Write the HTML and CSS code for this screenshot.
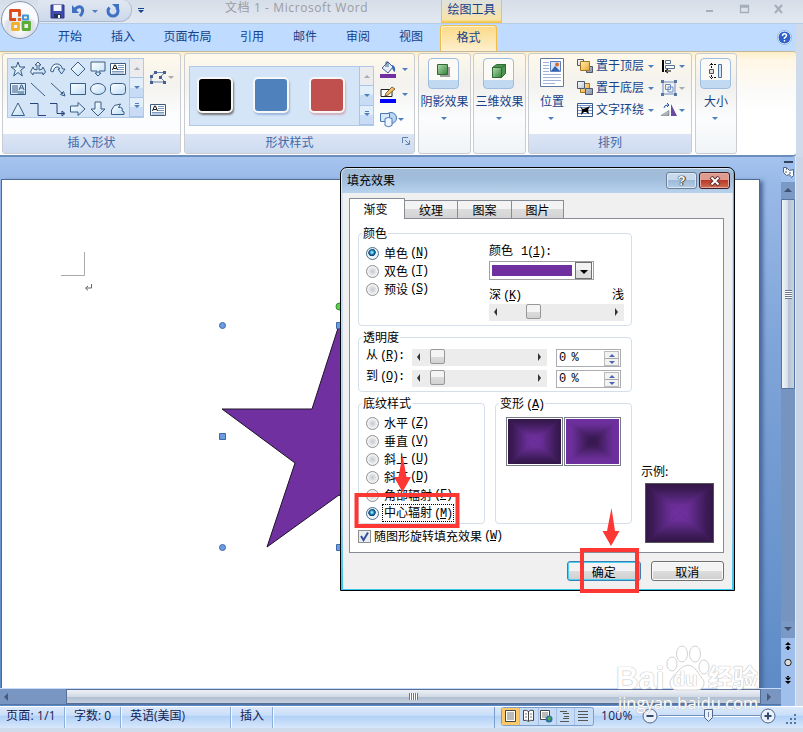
FILE: index.html
```html
<!DOCTYPE html>
<html lang="zh-CN">
<head>
  <meta charset="UTF-8">
  <title>文档 1 - Microsoft Word</title>
  <link rel="stylesheet" href="styles.css">
</head>
<body>
  <svg class="defs" width="0" height="0">
    <defs>
      <linearGradient id="shape" x1="0" y1="0" x2="1" y2="1"><stop offset="0" stop-color="#fff"/><stop offset="1" stop-color="#bcdcf5"/></linearGradient>
      <linearGradient id="green" x1="0" y1="0" x2="1" y2="1"><stop offset="0" stop-color="#b4dfb0"/><stop offset="1" stop-color="#34803b"/></linearGradient>
      <linearGradient id="gold" x1="0" y1="0" x2="1" y2="1"><stop offset="0" stop-color="#fff0b8"/><stop offset="1" stop-color="#eba529"/></linearGradient>
      <linearGradient id="grey" x1="0" y1="0" x2="1" y2="1"><stop offset="0" stop-color="#fafcff"/><stop offset="1" stop-color="#8794a8"/></linearGradient>
      <linearGradient id="right" x1="0" x2="1" y1="0" y2="0"><stop offset="0" stop-color="#7030a0"/><stop offset=".25" stop-color="#6a2e98"/><stop offset=".8" stop-color="#3c1b56"/><stop offset="1" stop-color="#331648"/></linearGradient>
      <linearGradient id="down" x1="0" x2="0" y1="0" y2="1"><stop offset="0" stop-color="#7030a0"/><stop offset=".25" stop-color="#6a2e98"/><stop offset=".8" stop-color="#3c1b56"/><stop offset="1" stop-color="#331648"/></linearGradient>
      <linearGradient id="right2" x1="0" x2="1" y1="0" y2="0"><stop offset="0" stop-color="#331648"/><stop offset=".2" stop-color="#3c1b56"/><stop offset=".75" stop-color="#6a2e98"/><stop offset="1" stop-color="#7030a0"/></linearGradient>
      <linearGradient id="down2" x1="0" x2="0" y1="0" y2="1"><stop offset="0" stop-color="#331648"/><stop offset=".2" stop-color="#3c1b56"/><stop offset=".75" stop-color="#6a2e98"/><stop offset="1" stop-color="#7030a0"/></linearGradient>
      <symbol id="center-out" viewBox="0 0 100 100" preserveAspectRatio="none">
        <rect width="100" height="100" fill="#4b2170"/>
        <path d="M50 50L100 0V100z" fill="url(#right)"/><path d="M50 50L100 0V100z" fill="url(#right)" transform="rotate(180 50 50)"/>
        <path d="M50 50L100 100H0z" fill="url(#down)"/><path d="M50 50L100 100H0z" fill="url(#down)" transform="rotate(180 50 50)"/>
      </symbol>
      <symbol id="center-in" viewBox="0 0 100 100" preserveAspectRatio="none">
        <rect width="100" height="100" fill="#5b2783"/>
        <path d="M50 50L100 0V100z" fill="url(#right2)"/><path d="M50 50L100 0V100z" fill="url(#right2)" transform="rotate(180 50 50)"/>
        <path d="M50 50L100 100H0z" fill="url(#down2)"/><path d="M50 50L100 100H0z" fill="url(#down2)" transform="rotate(180 50 50)"/>
      </symbol>
      <symbol id="textbox" viewBox="0 0 16 16"><path d="M.5 2.500h15v11H.5z" fill="#fff" stroke="#3c5a80"/><path d="M2 10.500h12M2 12h12M8 4.500h6M8 6.500h6M8 8.500h6" stroke="#7b98bd"/><path d="M2.500 9l2-5h1l2 5M3.500 7.500h3" stroke="#111" fill="none"/></symbol>
    </defs>
  </svg>

  <header class="titlebar">
    <div class="quick">
      <svg width="15" height="15" viewBox="0 0 15 15"><path d="M1 1h13v13H1z" fill="#3f4cae" stroke="#2c3488"/><path d="M3.500 1h8v6h-8z" fill="#f4f7ff"/><path d="M4 10h7v4H4z" fill="#26305c"/><path d="M8 11h2v3H8z" fill="#fff"/></svg>
      <svg width="14" height="14" viewBox="0 0 14 14"><path d="M3 5q5-4 7-1 2 4-2 8" fill="none" stroke="#3f70c4" stroke-width="3"/><path d="M0 1v8h7z" fill="#3f70c4"/></svg>
      <i class="arrow"></i>
      <svg width="14" height="14" viewBox="0 0 14 14"><path d="M3.500 3.500a5 5 0 1 0 7 0" fill="none" stroke="#3f70c4" stroke-width="3"/><path d="M6 0h7v7z" fill="#3f70c4"/></svg>
    </div>
    <div class="more"><b></b><i class="arrow"></i></div>
    <div class="doc-title">文档 1 - Microsoft Word</div>
    <div class="context-title">绘图工具</div>
    <svg class="caption" width="80" height="20" viewBox="0 0 80 20"><g fill="none" stroke="#a5adb8" stroke-width="2"><path d="M2 11h7"/><path d="M36.500 5.500h8v7h-8zM36 7h9" stroke-width="1.300"/><path d="M71 5l7 8M78 5l-7 8"/></g></svg>
  </header>
  <svg class="office" width="40" height="40" viewBox="0 0 40 40">
    <defs><radialGradient id="orb" cy=".75"><stop offset="0" stop-color="#fff"/><stop offset=".7" stop-color="#d9dee6"/><stop offset="1" stop-color="#f5f7fa"/></radialGradient></defs>
    <circle cx="20" cy="20" r="18.500" fill="url(#orb)" stroke="#8a97aa"/><path d="M3 21a17 17 0 0 1 34 0q-17-7-34 0z" fill="#fff" opacity=".55"/>
    <g fill="none" stroke-width="2.800" stroke-linejoin="round"><path d="M16 19.500h-5.500v-9h9v6" stroke="#dd4b18"/><path d="M23 15.500h5v4h-5z" stroke="#4196d6" stroke-width="2"/><path d="M12.500 23.500h6v6h-6z" stroke="#f2b02d"/><path d="M23 22.500h6.500v7H23z" stroke="#5bab35"/></g>
    <path d="M18 18h3v3h-3z" fill="#e6641e"/>
  </svg>

  <nav class="tabs">
    <a>开始</a><a>插入</a><a class="wide">页面布局</a><a>引用</a><a>邮件</a><a>审阅</a><a>视图</a><a class="active">格式</a>
    <svg class="help" width="15" height="15" viewBox="0 0 15 15"><circle cx="7.500" cy="7.500" r="6.500" fill="#2e62c9" stroke="#fff"/><circle cx="7.500" cy="7.500" r="7" fill="none" stroke="#7c9bd0" stroke-width=".7"/><path d="M5.500 6q0-2.200 2-2.200t2 1.800q0 1.200-2 2.200v1.200M7.500 10v1.600" stroke="#fff" stroke-width="1.500" fill="none"/></svg>
  </nav>

  <section class="ribbon">
    <div class="group insert">
      <div class="content">
        <div class="gallery">
          <div class="shapes">
            <svg viewBox="0 0 16 16"><path d="M8 1l1.800 5H15l-4.300 3.200L12.300 15 8 11.500 3.700 15l1.600-5.800L1 6h5.200z"/></svg>
            <svg viewBox="0 0 16 16"><path d="M8 1l3 3H9v5q4 0 4-3l2.500 5-2.500 3v-2H3v2L.5 11 3 6q0 3 4 3V4H5z"/></svg>
            <svg viewBox="0 0 16 16"><path d="M.5 10Q2 2 8 3q4 1 4.500 5H15l-3.500 5L8 8h2Q9 5 6 6q-2 1-3 5z"/></svg>
            <svg viewBox="0 0 16 16"><path d="M8 1l7 7-7 7-7-7z"/></svg>
            <svg viewBox="0 0 16 16"><path d="M1 1h14v9H9v2h2l-3 3-3-3h2v-2H1z"/></svg>
            <svg><use href="#textbox"/></svg>
            <svg viewBox="0 0 16 16"><path d="M.5 2.500h15v11H.5z"/><path d="M3 4v8M5 4v8M7 4v8M9 10v3M11 10v3M13 10v3M9 9l2-5h1l2 5M10 7h3"/></svg>
            <svg viewBox="0 0 16 16"><path d="M1 2l14 13"/></svg>
            <svg viewBox="0 0 16 16"><path d="M1 2l12 11M15 15l-1.500-4.500-3 3z"/></svg>
            <svg viewBox="0 0 16 16"><path d="M.5 2.500h15v11H.5z"/></svg>
            <svg viewBox="0 0 16 16"><ellipse cx="8" cy="8" rx="7.500" ry="5.500"/></svg>
            <svg viewBox="0 0 16 16"><rect x=".5" y="2.500" width="15" height="11" rx="3"/></svg>
            <svg viewBox="0 0 16 16"><path d="M8 2l6.500 12.500h-13z"/></svg>
            <svg viewBox="0 0 16 16"><path class="line" d="M0 2.500h8v12h8"/></svg>
            <svg viewBox="0 0 16 16"><path class="line" d="M0 2.500h7v10h7M12 10l3 2.500-3 2.500z"/></svg>
            <svg viewBox="0 0 16 16"><path d="M.5 5H8V1.500L15 8l-7 6.500V11H.5z"/></svg>
            <svg viewBox="0 0 16 16"><path d="M5 1h6v7h4l-7 7-7-7h4z"/></svg>
            <svg viewBox="0 0 16 16"><path d="M1.500 13.500V9l3-4.500 6-1.500-2 3.500q5-1 3.500 3.500 3 0 2 3.500z"/></svg>
          </div>
          <div class="scroll"><span><i class="arrow up"></i></span><span><i class="arrow"></i></span><span><i class="arrow bar"></i></span></div>
        </div>
        <div class="edit-tools">
          <div><svg width="17" height="14" viewBox="0 0 17 14"><path d="M5 2.500h10L10 7l5 5H1V7z" fill="none" stroke="#6583b5"/><path d="M4 1h3v3H4zM13 1h3v3h-3zM9 6h3v3H9zM13 11h3v3h-3zM0 11h3v3H0zM0 5h3v3H0z" fill="#45608f"/></svg><i class="arrow dim"></i></div>
          <svg width="16" height="16"><use href="#textbox"/></svg>
        </div>
      </div>
      <footer>插入形状</footer>
    </div>

    <div class="group styles">
      <div class="content">
        <div class="gallery">
          <div class="swatches"><b class="black"></b><b class="blue"></b><b class="red"></b></div>
          <div class="scroll"><span><i class="arrow up"></i></span><span><i class="arrow"></i></span><span><i class="arrow bar"></i></span></div>
        </div>
        <div class="fills">
          <div><svg width="17" height="17" viewBox="0 0 17 17"><path d="M8 1l5 5-5 6-6-5z" fill="#e5eefb" stroke="#45608f"/><path d="M6 6V1h2v5" fill="none" stroke="#45608f"/><path d="M12 4q4 1 3 7-2-1-3-4z" fill="#3867b5"/><path d="M0 13h16v4H0z" fill="#7030a0"/></svg><i class="arrow"></i></div>
          <div><svg width="17" height="17" viewBox="0 0 17 17"><path d="M1 3.500h11v7H1z" fill="#fff" stroke="#222"/><path d="M5 10l1-3 6-6 3 2-7 6z" fill="#f0c36a" stroke="#6b4a22" stroke-width=".8"/><path d="M0 13h16v4H0z" fill="#00f"/></svg><i class="arrow"></i></div>
          <div><svg width="17" height="17" viewBox="0 0 17 17"><circle cx="11" cy="7" r="5.500" fill="#b9d5f2" stroke="#4a79b5"/><path d="M.5 2.500h9v8h-9z" fill="#d8e9fa" stroke="#4a79b5"/><path d="M5 7.500v7q3.500 2.500 7 0v-7q-3.500-2-7 0z" fill="#edf6ff" stroke="#4a79b5"/></svg><i class="arrow"></i></div>
        </div>
      </div>
      <footer>形状样式<svg width="8" height="8" viewBox="0 0 8 8"><path d="M.5 6V.5H6M3 3l4 4M7.500 3.500v4h-4" fill="none" stroke="#5c84b0"/></svg></footer>
    </div>

    <div class="group big shadow">
      <div class="tile"><svg width="16" height="16" viewBox="0 0 16 16"><path d="M4 4h10v10H4z" fill="#777" opacity=".7"/><path d="M1.500 1.500h10v10h-10z" fill="url(#green)" stroke="#2d6a35"/></svg></div>
      <span>阴影效果</span><i class="arrow"></i>
    </div>
    <div class="group big cube">
      <div class="tile"><svg width="16" height="16" viewBox="0 0 16 16"><path d="M1.500 4.500l4-3h9v9l-4 4h-9z" fill="#4a9450" stroke="#2d6a35"/><path d="M1.500 4.500h9v10h-9z" fill="url(#green)" stroke="#2d6a35"/><path d="M10.500 4.500l4-3" stroke="#2d6a35"/></svg></div>
      <span>三维效果</span><i class="arrow"></i>
    </div>

    <div class="group arrange">
      <div class="content">
        <div class="position">
          <svg width="24" height="29" viewBox="0 0 24 29"><path d="M.5.5h23v28H.5z" fill="#fff" stroke="#6079a3"/><path d="M3 4.500h6M3 7.500h6M3 10.500h6M3 13.500h6M3 16.500h18M3 19.500h18M3 22.500h18M3 25.500h12" stroke="#a3b1d6"/><path d="M10.500 3.500h10v10h-10z" fill="#d5e6ff" stroke="#5b7fc0"/><path d="M11 13l4-5 5 5z" fill="#3761ad"/><circle cx="17" cy="6.500" r="2" fill="#dd6b24"/></svg>
          <span>位置</span><i class="arrow"></i>
        </div>
        <div class="order">
          <div><svg width="16" height="16" viewBox="0 0 16 16"><path d="M.5 1.500h6v6h-6zM9.500 8.500h6v6h-6z" fill="url(#grey)" stroke="#4d596c"/><path d="M3.500 3.500h9v9h-9z" fill="url(#gold)" stroke="#a27522"/></svg><span>置于顶层</span><i class="arrow"></i></div>
          <div><svg width="16" height="16" viewBox="0 0 16 16"><path d="M3.500 3.500h9v9h-9z" fill="url(#gold)" stroke="#a27522"/><path d="M.5 1.500h7v7h-7zM8.500 8.500h7v6h-7z" fill="url(#grey)" stroke="#4d596c"/></svg><span>置于底层</span><i class="arrow"></i></div>
          <div><svg width="16" height="16" viewBox="0 0 16 16"><path d="M.5 1.500h15v13H.5z" fill="#fff" stroke="#35588a"/><path d="M1 3.500h14M1 5.500h14M1 8.500h14M1 11.500h14" stroke="#7092c4"/><path d="M3 4l3 3 3-1 4-2-2 4 1 4-3-2-2 0-3 3 1-5z" fill="#000"/></svg><span>文字环绕</span><i class="arrow"></i></div>
        </div>
        <div class="align">
          <div><svg width="16" height="16" viewBox="0 0 16 16"><path d="M2 2v12" stroke="#000" stroke-width="2"/><path d="M4.500 2.500h5v3h-5zM4.500 7.500h9v3h-9z" fill="#fff" stroke="#54708f"/><path d="M4 13h6M7 11l-3 2 3 2" stroke="#000" fill="none"/></svg><i class="arrow"></i></div>
          <div><svg width="16" height="16" viewBox="0 0 16 16"><path d="M2 2h12v12H2zM4.500 4.500h5v5h-5zM7 7h5v5H7z" fill="none" stroke="#6b8cc0"/><path d="M0 0h3v3H0zM13 0h3v3h-3zM0 13h3v3H0zM13 13h3v3h-3z" fill="#58779f"/></svg><i class="arrow dim"></i></div>
          <div><svg width="16" height="16" viewBox="0 0 16 16"><path d="M0 13.500l8-5v5z" fill="url(#grey)" stroke="#777" stroke-width=".6"/><path d="M10 2v12h6z" fill="#6b4ba0"/><path d="M3 6q0-3 4-3M6 1l2 2-2 2" stroke="#2a56a8" fill="none"/></svg><i class="arrow"></i></div>
        </div>
      </div>
      <footer>排列</footer>
    </div>

    <div class="group big size">
      <div class="tile"><svg width="16" height="16" viewBox="0 0 16 16"><path d="M10.500 1.500h3v13h-3z" fill="#d5e8fb" stroke="#4f7198"/><path d="M1.500 6.500h4v4h-4z" fill="#ddd" stroke="#555"/><path d="M3.500 0v5M3.500 12v4M1.500 2.500l2-2 2 2M1.500 13.500l2 2 2-2M6 1.500h3M6 14.500h3" fill="none" stroke="#111" stroke-dasharray="2 1"/></svg></div>
      <span>大小</span><i class="arrow"></i>
    </div>
  </section>

  <main class="workspace">
    <div class="canvas">
      <div class="page">
        <!-- margin mark, paragraph mark and the selected star -->
        <svg width="758" height="508" viewBox="2 180 758 508">
          <path d="M61 275.500h23.500V252" fill="none" stroke="#aaa"/>
          <path d="M91.500 284v4H86M88 286l-2.500 2.200 2.500 2.200" fill="none" stroke="#666"/>
          <path d="M339 325l27 84h89l-72 54 28 84-72-52-72 52 28-84-73-54h90z" fill="#7030a0" stroke="#1e1428"/>
          <g fill="#6b9be0" stroke="#3d6aa8"><circle cx="222.500" cy="325.500" r="3"/><circle cx="222.500" cy="547.500" r="3"/><path d="M219.500 433.500h6v6h-6zM336.500 322.500h6v6h-6zM336.500 544.500h6v6h-6z"/></g>
          <circle cx="339.500" cy="306.500" r="3.500" fill="#5bd04f" stroke="#2b8a26"/>
        </svg>
      </div>
      <div class="hscroll">
        <i class="left"></i><div class="thumb"><em></em></div><i class="right"></i>
      </div>
    </div>
    <div class="vscroll">
      <b class="split"></b>
      <svg class="ruler" width="13" height="13" viewBox="0 0 13 13"><path d="M1.500 1.500h3v2l1-1 2 2 4-1v6l-2 2-2-3-3 1-3-3z" fill="#f7f9fc" stroke="#53657f"/><path d="M4 5v2M8 6v2" stroke="#53657f"/></svg>
      <div class="btn"><i></i></div>
      <div class="track"><div class="thumb"><em></em></div></div>
      <div class="btn dn"><i></i></div>
      <svg width="14" height="68" viewBox="0 0 14 68"><path d="M7 4l3 3H4zM7 7.500l3 3H4zM6 10h2v2H6zM7 46l3-3H4zM7 42.500l3-3H4zM6 38h2v2H6z" fill="#000"/><circle cx="7" cy="24.500" r="3.200" fill="#ddd" stroke="#222"/></svg>
    </div>
    <div class="frame"></div>
  </main>

  <footer class="status">
    <span class="pages">页面: 1/1</span><span class="words">字数: 0</span><span class="lang">英语(美国)</span><span class="ins">插入</span>
    <div class="rest"></div>
    <svg class="views" width="93" height="20" viewBox="0 0 93 20">
      <rect x=".5" y=".5" width="92" height="18" rx="2" fill="#c5dbf6" stroke="#7d9ecb"/><path d="M1 1h17v17H1z" fill="#fbc969"/><path d="M18.500 1v17M37.500 1v17M55.500 1v17M73.500 1v17" stroke="#a5c0e3"/>
      <path d="M4.500 3.500h10v11h-10z" fill="#fff" stroke="#444"/><path d="M6 6h7M6 8h7M6 10h7M6 12h7" stroke="#777"/>
      <path d="M22.500 3.500q3-1 5 1 2-2 5-1v10q-3-1-5 1-2-2-5-1zM27.500 4v10" fill="#fff" stroke="#444"/><path d="M24 7h2M24 10h2M29 7h2M29 10h2" stroke="#777"/>
      <path d="M39.500 3.500h9v9h-9z" fill="#fff" stroke="#444"/><path d="M41 6h6M41 8h6M41 10h4" stroke="#777"/><circle cx="48" cy="12" r="3.500" fill="#2b73a4"/><path d="M46 11l3-2 1 3-2 2z" fill="#53a648"/>
      <path d="M59 4.500h7M62 6.500h6M63 9.500h5M62 11.500h6M59 14.500h9M77 4.500h10M77 7.500h10M77 10.500h10M77 13.500h10" stroke="#555"/>
    </svg>
    <span class="percent">100%</span>
    <svg class="zoom" width="136" height="20" viewBox="0 0 136 20"><path d="M18 8.500h101" stroke="#6f8db8"/><path d="M18 9.500h101" stroke="#fff"/><g fill="#e9f0fa" stroke="#51688b"><circle cx="9" cy="9" r="7"/><circle cx="127" cy="9" r="7"/><path d="M63.500 2.500h8v8l-4 4-4-4z"/></g><path d="M5.500 9h7M123.500 9h7M127 5.500v7" stroke="#334a6f" stroke-width="2"/><path d="M67.500 5v5" stroke="#7288aa"/></svg>
    <svg class="grip" width="14" height="14" viewBox="0 0 14 14"><path d="M9 1h2v2H9zM9 5h2v2H9zM5 5h2v2H5zM9 9h2v2H9zM5 9h2v2H5zM1 9h2v2H1z" fill="#54779f"/></svg>
  </footer>

  <div class="dialog">
    <div class="head">
      <span>填充效果</span>
      <button class="ask">?</button>
      <button class="close"><svg width="12" height="10" viewBox="0 0 12 10"><path d="M2 1l8 8M10 1L2 9" stroke="#5d2a2a" stroke-width="4"/><path d="M2.500 1.500l7 7M9.500 1.500l-7 7" stroke="#fff" stroke-width="2"/></svg></button>
    </div>
    <div class="body">
      <div class="sheet-tabs"><span class="on">渐变</span><span>纹理</span><span>图案</span><span>图片</span></div>
      <div class="sheet">
        <div class="box color">
          <h4>颜色</h4>
          <div class="cols">
            <div class="radios">
              <label class="checked"><i></i>单色<kbd>(<u>N</u>)</kbd></label>
              <label><i></i>双色<kbd>(<u>T</u>)</kbd></label>
              <label><i></i>预设<kbd>(<u>S</u>)</kbd></label>
            </div>
            <div class="pick">
              <div class="caption1">颜色<kbd> 1(<u>1</u>):</kbd></div>
              <div class="combo"><b></b><button></button></div>
              <div class="ends"><span>深<kbd>(<u>K</u>)</kbd></span><span>浅</span></div>
              <div class="slider mid"><b></b></div>
            </div>
          </div>
        </div>

        <div class="box alpha">
          <h4>透明度</h4>
          <div class="line"><span>从<kbd>(<u>R</u>):</kbd></span><div class="slider"><b></b></div><div class="spin">0 %<em></em></div></div>
          <div class="line"><span>到<kbd>(<u>O</u>):</kbd></span><div class="slider"><b></b></div><div class="spin">0 %<em></em></div></div>
        </div>

        <div class="lower">
          <div class="box shading">
            <h4>底纹样式</h4>
            <div class="radios">
              <label><i></i>水平<kbd>(<u>Z</u>)</kbd></label>
              <label><i></i>垂直<kbd>(<u>V</u>)</kbd></label>
              <label><i></i>斜上<kbd>(<u>U</u>)</kbd></label>
              <label><i></i>斜下<kbd>(<u>D</u>)</kbd></label>
              <label><i></i>角部辐射<kbd>(<u>F</u>)</kbd></label>
              <label class="checked focus"><i></i><span>中心辐射<kbd>(<u>M</u>)</kbd></span></label>
            </div>
          </div>
          <div class="box variants">
            <h4>变形<kbd>(<u>A</u>)</kbd></h4>
            <div class="pair"><svg><use href="#center-out"/></svg><svg><use href="#center-in"/></svg></div>
          </div>
          <div class="sample">示例:<svg><use href="#center-out"/></svg></div>
        </div>
        <label class="rotate"><i><svg width="11" height="11" viewBox="0 0 11 11"><path d="M2 5l2.500 4L9 1.500" fill="none" stroke="#33519b" stroke-width="2"/></svg></i>随图形旋转填充效果<kbd>(<u>W</u>)</kbd></label>
      </div>
      <div class="buttons"><button class="ok">确定</button><button>取消</button></div>
    </div>
  </div>

  <!-- step markers -->
  <svg class="marks" width="803" height="732" viewBox="0 0 803 732">
    <g fill="none" stroke="#fd3734" stroke-width="4"><path d="M356.500 495h101v31h-101z"/><path d="M582 550h55v41h-55z"/></g>
    <path d="M402.500 455l4 22h4.500l-8.500 15-8.500-15h4.500zM611.500 508l3.500 23h4.500l-8.500 15-8.500-15h4.500z" fill="#fd3734"/>
  </svg>

  <div class="watermark">
    <span class="bai">Bai</span>
    <svg width="46" height="46" viewBox="0 0 46 46"><g fill="#fff" stroke="#d3d3d3"><ellipse cx="7" cy="19" rx="5" ry="7"/><ellipse cx="17" cy="9" rx="5.500" ry="8"/><ellipse cx="30" cy="9" rx="5.500" ry="8"/><ellipse cx="39" cy="22" rx="5" ry="7"/><path d="M23 20q5 0 9 6t7 10q1 9-8 9H13q-9 0-8-9 2-4 8-10 5-6 10-6z"/></g></svg>
    <span class="du">du</span><span class="jy">经验</span>
    <span class="url">jingyan.baidu.com</span>
  </div>
</body>
</html>
```

FILE: styles.css
```css
* {
  box-sizing: border-box;
}
body {
  margin: 0;
  width: 803px;
  height: 732px;
  overflow: hidden;
  position: relative;
  display: flex;
  flex-direction: column;
  background: #cfdbeb;
  font: 12px/16px "Open Sans", "Noto Sans CJK SC", sans-serif;
  color: #15428b;
}
svg {
  display: block;
  flex: none;
}
.defs {
  position: absolute;
}
button {
  font: inherit;
  padding: 0;
}
.arrow {
  flex: none;
  width: 0;
  height: 0;
  border: 3px solid transparent;
  border-top-color: #4d7fc0;
  border-bottom: 0;
}
.arrow.dim {
  border-top-color: #aaa;
}
.arrow.up {
  border-top: 0;
  border-bottom: 3px solid #a5a9b0;
}
.arrow.bar {
  box-shadow: 0 -3px 0 -1px #4d7fc0;
}

/* title bar */
.titlebar {
  flex: none;
  height: 24px;
  display: flex;
  background: linear-gradient(#d5dde8, #e3e9f1);
  border-bottom: 1px solid #b7cce6;
}
.quick {
  margin-left: 38px;
  width: 94px;
  height: 22px;
  padding: 1px 12px 0;
  display: flex;
  align-items: center;
  gap: 7px;
  border: 1px solid #a9b9cf;
  border-width: 0 1px 1px 0;
  border-radius: 0 9px 12px 0;
  background: linear-gradient(#e0e7f1, #ccd9ea);
}
.quick .arrow {
  margin: 0 1px 0 -1px;
}
.more {
  width: 7px;
  margin: 8px 0 0 6px;
}
.more b {
  display: block;
  width: 6px;
  height: 1px;
  margin-bottom: 1px;
  background: #15428b;
}
.more .arrow {
  display: block;
  border-top-color: #15428b;
}
.doc-title {
  width: 296px;
  padding-left: 80px;
  color: #9b9da1;
  white-space: nowrap;
  letter-spacing: .6px;
}
.context-title {
  width: 61px;
  height: 23px;
  padding-top: 2px;
  text-align: center;
  border: 1px solid #c5c3b5;
  border-width: 0 1px;
  background: linear-gradient(#dfe1df, #f8e3a8 85%, #f4be34);
}
.caption {
  margin-left: 202px;
}
.office {
  position: absolute;
  left: 0;
  top: 0;
}

/* ribbon tabs */
.tabs {
  flex: none;
  height: 27px;
  width: 796px;
  padding-left: 46px;
  display: flex;
  background: #bfdbff;
}
.tabs a {
  width: 48px;
  margin-right: 5px;
  padding-top: 5px;
  text-align: center;
}
.tabs a.wide {
  width: 71px;
}
.tabs a.active {
  width: 57px;
  margin: 1px 0 0;
  border: 1px solid #f0bd4b;
  border-bottom: 0;
  border-radius: 3px 3px 0 0;
  padding-top: 4px;
  background: linear-gradient(#fbd986, #fdf0cf);
  box-shadow: inset 1px 1px #fff2cc;
}
.help {
  margin: 6px 4px 0 auto;
}

/* ribbon */
.ribbon {
  flex: none;
  height: 106px;
  width: 796px;
  padding: 1px 0 2px 2px;
  display: flex;
  border-top: 1px solid #c3b89c;
  border-bottom: 2px solid #6a8ebd;
  border-radius: 0 3px 4px 0;
  background: linear-gradient(#ffeec5, #fff7e6 8%, #fbfbfa 40%, #fff 60%);
}
.group {
  height: 101px;
  display: flex;
  flex-direction: column;
  border: 1px solid #c9ccd0;
  border-radius: 3px;
  background: linear-gradient(#fff9ea, #f3f2ee 30%, #fbfcfd 60%, #fff);
}
.group .content {
  flex: 1;
  display: flex;
}
.group footer {
  height: 19px;
  padding-top: 1px;
  text-align: center;
  color: #3e6aaa;
  background: linear-gradient(#dbe5f4, #cedbf0);
}
.insert {
  width: 179px;
}
.insert .gallery {
  margin: 4px 0 0 4px;
  width: 137px;
  height: 60px;
}
.gallery {
  display: flex;
  border: 1px solid #b0c9e8;
  background: #d5e5f8;
}
.shapes {
  width: 122px;
  display: grid;
  grid-template-columns: repeat(6, 20px);
  grid-template-rows: repeat(3, 20px);
  place-items: center;
}
.shapes svg {
  width: 16px;
  height: 16px;
  fill: url(#shape);
  stroke: #3a5d85;
}
.shapes .line {
  fill: none;
  stroke: #26437a;
}
.scroll {
  width: 14px;
  display: flex;
  flex-direction: column;
}
.scroll span {
  flex: 1;
  display: flex;
  align-items: center;
  justify-content: center;
  border: 1px solid #a9c4e6;
  border-width: 0 0 1px 1px;
  background: linear-gradient(#e3eefb 50%, #c8dcf5 50%);
}
.scroll span:first-child {
  background: #ececee;
}
.edit-tools {
  margin: 16px 0 0 6px;
}
.edit-tools div {
  display: flex;
  align-items: center;
  gap: 1px;
  margin-bottom: 18px;
}
.styles {
  width: 231px;
  margin-left: 3px;
}
.styles .gallery {
  width: 185px;
  height: 60px;
  margin: 12px 0 0 4px;
}
.swatches {
  flex: 1;
  display: flex;
  gap: 20px;
  padding: 10px 0 0 7px;
}
.swatches b {
  width: 36px;
  height: 36px;
  border: 2px solid #f7f7f7;
  border-radius: 5px;
  box-shadow: 1px 2px 2px #777;
}
.swatches .black {
  background: #000;
}
.swatches .blue {
  background: #4f81bd;
  box-shadow: 1px 2px 2px #9bb8de;
}
.swatches .red {
  background: #c0504d;
  box-shadow: 1px 2px 2px #d1aebb;
}
.fills {
  margin: 3px 0 0 6px;
}
.fills div {
  display: flex;
  align-items: center;
  gap: 5px;
  height: 25px;
}
.fills div:last-child {
  gap: 1px;
}
.styles footer {
  position: relative;
  padding-right: 20px;
}
.styles footer svg {
  position: absolute;
  right: 4px;
  top: 3px;
}
.big {
  width: 53px;
  align-items: center;
  background: linear-gradient(#fff9ea, #f0efed 30%, #fbfcfd 65%, #f0f4f6);
  white-space: nowrap;
}
.shadow {
  margin-left: 3px;
}
.cube, .arrange {
  margin-left: 2px;
}
.tile {
  width: 31px;
  height: 31px;
  margin: 4px 2px 5px 0;
  padding: 4px 7px;
  border: 1px solid #9dbce0;
  border-radius: 4px;
  background: linear-gradient(#fbfaf6 73%, #c2d9f2 73%);
}
.big .arrow, .position .arrow {
  margin-top: 7px;
  margin-right: 2px;
}
.arrange {
  width: 164px;
}
.position {
  width: 46px;
  padding-top: 4px;
  display: flex;
  flex-direction: column;
  align-items: center;
}
.position span {
  margin-top: 7px;
}
.order {
  padding: 1px 0 0 2px;
}
.order div, .align div {
  display: flex;
  align-items: center;
  height: 22px;
}
.order svg {
  margin-right: 3px;
}
.order .arrow {
  margin-left: 4px;
}
.align {
  padding: 1px 0 0 7px;
}
.align .arrow {
  margin-left: 2px;
}
.size {
  width: 42px;
  margin-left: 3px;
}

/* document area */
.workspace {
  flex: none;
  height: 549px;
  display: flex;
}
.canvas {
  width: 781px;
  display: flex;
  flex-direction: column;
  padding-top: 22px;
  background: linear-gradient(#a7c4ef, #9abae8 4%, #7fa4d8 35%, #5c8ac6);
}
.page {
  width: 759px;
  height: 509px;
  margin-left: 1px;
  border: 1px solid #506a92;
  border-bottom: 0;
  background: #fff;
  box-shadow: 3px 2px 4px #48699c;
}
.hscroll {
  position: relative;
  height: 17px;
  display: flex;
  align-items: center;
  background: #7896c1;
  border-top: 1px solid #c4dbfb;
  border-bottom: 1px solid #5675a5;
}
.hscroll i, .vscroll .btn i {
  border: 4px solid transparent;
}
.hscroll .left {
  width: 0;
  border-right-color: #48597d;
}
.hscroll .right {
  margin-left: 6px;
  border-left-color: #48597d;
}
.hscroll .thumb {
  width: 695px;
  height: 15px;
  margin-left: 58px;
  display: grid;
  place-items: center;
  border: 1px solid #576f98;
  background: linear-gradient(#eef1f6, #d2dae6 50%, #aebdd0 50%, #c6d1de);
}
.hscroll em {
  width: 9px;
  height: 7px;
  background: repeating-linear-gradient(90deg, #6a7891 0 1px, #fff 1px 2px);
}
.vscroll {
  width: 14px;
  display: flex;
  flex-direction: column;
  align-items: center;
  background: #9fbfed;
}
.vscroll .split {
  width: 9px;
  height: 2px;
  margin: 4px 0 3px;
  background: #33445f;
}
.ruler {
  margin-bottom: 3px;
}
.vscroll .btn {
  width: 14px;
  height: 17px;
  padding: 2px 3px;
  background: #7a99c5;
}
.vscroll .btn i {
  display: block;
  border-bottom-color: #3d5175;
}
.vscroll .dn i {
  border-color: #3d5175 transparent transparent;
  margin-top: 4px;
}
.vscroll .track {
  flex: 1;
  width: 14px;
  background: #7694c0;
}
.vscroll .thumb {
  height: 190px;
  display: grid;
  place-items: center;
  border: 1px solid #5573a3;
  border-radius: 1px;
  background: linear-gradient(90deg, #f2f4f8, #d5dde8 50%, #b4c2d5 50%, #c9d3e0);
}
.vscroll em {
  width: 7px;
  height: 9px;
  background: repeating-linear-gradient(#6a7891 0 1px, #fff 1px 2px);
}
.frame {
  flex: 1;
  background: #cad6e7;
  border-left: 1px solid #e0e8f2;
}

/* status bar */
.status {
  flex: none;
  height: 22px;
  display: flex;
  border-top: 1px solid #fff;
  background: linear-gradient(#dce9fb, #c9def9 40%, #b0d0f7 42%, #d7e7fb);
  color: #151c55;
}
.status > span {
  padding-top: 1px;
  white-space: nowrap;
}
.pages, .words, .lang, .ins {
  border-right: 1px solid #8dafdc;
  box-shadow: 1px 0 #f3f8ff;
}
.pages {
  width: 65px;
  padding-left: 6px;
  letter-spacing: .2px;
}
.words {
  width: 56px;
  padding-left: 9px;
}
.lang {
  width: 110px;
  padding-left: 9px;
}
.ins {
  width: 42px;
  padding-left: 9px;
}
.rest {
  width: 222px;
  border-right: 1px solid #7c9fcb;
}
.views {
  margin-left: 6px;
}
.percent {
  width: 40px;
  padding-left: 7px;
  letter-spacing: .3px;
}
.zoom {
  margin-left: 7px;
}
.grip {
  margin: 6px 0 0 8px;
}

/* dialog */
.dialog {
  position: absolute;
  left: 340px;
  top: 167px;
  width: 395px;
  height: 424px;
  padding: 1px;
  border: 1px solid #000;
  border-radius: 7px 7px 0 0;
  background: linear-gradient(#d8e9fa, #a9c9ec 80%, #35c7ec);
  box-shadow: inset -1px -1px #35c7ec;
  color: #000;
  font-family: "Noto Sans CJK SC", sans-serif;
}
.head {
  height: 24px;
  padding: 3px 3px 0 5px;
  display: flex;
  border-radius: 5px 5px 0 0;
  background: linear-gradient(#a1bbd7, #a0bddb 40%, #b7d2ed);
}
.head span {
  flex: 1;
}
.head button {
  width: 31px;
  height: 17px;
  margin-left: 2px;
  display: grid;
  place-items: center;
  border: 1px solid #6c7f96;
  border-radius: 3px;
  background: linear-gradient(#c7d9ec 50%, #9fbad7 50%, #b3cde8);
  box-shadow: inset 0 0 0 1px #dce8f4;
}
.head .ask {
  font: bold 13px/14px "Liberation Sans", sans-serif;
  color: #fff;
  text-shadow: 0 0 1px #222, 0 0 1px #222, 1px 0 1px #222;
}
.head .close {
  border-color: #431c22;
  background: linear-gradient(#dd9c8f 48%, #b93a28 50%, #cf6e55);
  box-shadow: inset 0 0 0 1px #e1aca4;
}
.body {
  height: 396px;
  margin-left: 1px;
  margin-right: 1px;
  padding: 5px 8px 0 6px;
  background: #f0f0f0;
}
.sheet-tabs {
  height: 20px;
  display: flex;
  align-items: flex-end;
}
.sheet-tabs span {
  height: 18px;
  width: 53px;
  padding: 1px 0 0;
  text-align: center;
  border: 1px solid #878c96;
  border-width: 1px 1px 0 0;
  background: linear-gradient(#f3f3f3 50%, #dcdcdc 50%, #d4d4d4);
}
.sheet-tabs span:nth-child(3) {
  width: 54px;
}
.sheet-tabs .on {
  position: relative;
  width: 56px;
  height: 21px;
  margin-bottom: -1px;
  border-left-width: 1px;
  padding: 2px 3px 0 0;
  background: #fff;
}
.sheet-tabs span:last-child {
  width: 52px;
}
.sheet {
  width: 375px;
  height: 335px;
  padding: 14px 0 0 8px;
  border: 1px solid #878c96;
  background: #fff;
}
kbd {
  font: 12px/14px "Liberation Mono", monospace;
  letter-spacing: -1.2px;
  margin-left: 2px;
  white-space: pre;
}
.box {
  border: 1px solid #d5dfe9;
  border-radius: 4px;
  padding: 0 7px;
}
.box h4 {
  width: max-content;
  height: 16px;
  margin: -9px 0 0 -4px;
  padding: 0 1px;
  font-size: 12px;
  font-weight: normal;
  background: #fff;
}
.color {
  width: 274px;
  height: 93px;
}
.cols {
  display: flex;
}
.radios {
  padding-top: 3px;
}
.radios label {
  height: 18px;
  padding-bottom: 1px;
  display: flex;
  align-items: center;
  white-space: nowrap;
}
.radios i {
  flex: none;
  width: 13px;
  height: 13px;
  margin: 2px 5px 0 0;
  border: 1px solid #8e8f8f;
  border-radius: 50%;
  background: radial-gradient(#c5c9ce, #e8eaed 50%, #fff);
  box-shadow: inset 0 0 0 1px #f4f4f4;
}
.radios .checked i {
  border-color: #49718b;
  background: radial-gradient(circle at 45% 40%, #9be4ff 0 5%, #157fb9 25%, #103a68 38%, #e9f3f8 46%);
}
.focus span {
  margin-left: -2px;
  padding: 0 1px;
  border: 1px dotted #000;
  line-height: 14px;
}
.pick {
  margin-left: 64px;
  width: 135px;
}
.color .radios {
  width: 59px;
}
.caption1 {
  padding-top: 1px;
}
.combo {
  width: 105px;
  height: 19px;
  margin-top: 2px;
  padding: 1px 1px 1px 3px;
  display: flex;
  border: 1px solid #a0a0a0;
}
.combo b {
  width: 81px;
  height: 11px;
  margin: 2px 2px 0 -1px;
  background: #7030a0;
}
.combo button {
  width: 17px;
  height: 17px;
  margin: -1px 0 0 1px;
  border: 1px solid #707070;
  background: linear-gradient(#f2f2f2 50%, #ddd 50%);
}
.combo button::after {
  content: "";
  display: block;
  margin: 2px auto 0;
  width: 0;
  border: 4px solid transparent;
  border-top-color: #000;
  border-bottom: 0;
}
.ends {
  display: flex;
  justify-content: space-between;
  margin-top: 6px;
}
.slider {
  position: relative;
  width: 135px;
  height: 17px;
  padding-left: 18px;
  background: #ececec;
}
.slider::before, .slider::after {
  content: "";
  position: absolute;
  top: 4px;
  left: 5px;
  border: 4px solid transparent;
  border-left-width: 0;
  border-right: 3px solid #333;
}
.slider::after {
  left: auto;
  right: 6px;
  border-right: 0;
  border-left: 3px solid #333;
}
.slider b {
  display: block;
  width: 15px;
  height: 15px;
  border: 1px solid #979797;
  border-radius: 2px;
  background: linear-gradient(#f4f4f4 50%, #dcdcdc 50%, #d2d2d2);
}
.slider.mid {
  padding-left: 37px;
  margin-top: 1px;
}
.alpha {
  width: 274px;
  height: 55px;
  margin-top: 11px;
}
.line {
  display: flex;
  height: 21px;
  padding-top: 4px;
}
.line > span {
  width: 46px;
  margin-top: -3px;
}
.spin {
  width: 65px;
  height: 18px;
  margin-left: 9px;
  padding: 0 0 0 2px;
  display: flex;
  justify-content: space-between;
  border: 1px solid #abadb3;
  font: 12px/17px "Liberation Mono", monospace;
  letter-spacing: -1px;
}
.spin em {
  position: relative;
  width: 15px;
  height: 15px;
  margin: 1px 1px 0 0;
  border: 1px solid #bbb;
  background: linear-gradient(#f2f2f2 45%, #a7a7a7 45% 55%, #f2f2f2 55%);
}
.spin em::before, .spin em::after {
  content: "";
  position: absolute;
  left: 4px;
  top: 2px;
  border: 3px solid transparent;
  border-top: 0;
  border-bottom-color: #4a66b5;
}
.spin em::after {
  top: 9px;
  border: 3px solid transparent;
  border-bottom: 0;
  border-top-color: #4a66b5;
}
.lower {
  display: flex;
  height: 121px;
  margin-top: 11px;
}
.shading {
  width: 127px;
  height: 121px;
}
.variants {
  width: 137px;
  height: 121px;
  margin-left: 10px;
}
.pair {
  display: flex;
  gap: 1px;
  margin: 6px 0 0 3px;
}
.pair svg {
  width: 57px;
  height: 49px;
  padding: 1px;
  border: 1px solid #777b86;
}
.sample {
  margin: 60px 0 0 9px;
}
.sample svg {
  width: 69px;
  height: 60px;
  margin: 4px 0 0 4px;
  border: 1px solid #555;
}
.rotate {
  display: flex;
  align-items: center;
  margin-top: 4px;
}
.rotate i {
  width: 13px;
  height: 13px;
  margin: 1px 3px 0 0;
  border: 1px solid #8e8f8f;
  background: #e9edf2;
}
.buttons {
  display: flex;
  gap: 10px;
  padding: 8px 0 0 218px;
}
.buttons button {
  width: 74px;
  height: 20px;
  padding-top: 1px;
  line-height: 17px;
  border: 1px solid #707070;
  border-radius: 3px;
  background: linear-gradient(#f3f3f3 50%, #dddddd 50%, #cfcfcf);
  box-shadow: inset 0 0 0 1px #fafafa;
}
.buttons .ok {
  border-color: #3c7fb1;
  box-shadow: inset 0 0 0 1px #48d1f5;
}

/* overlays */
.marks {
  position: absolute;
  left: 0;
  top: 0;
}
.watermark {
  position: absolute;
  left: 616px;
  top: 645px;
  color: #fff;
  white-space: nowrap;
  font-family: "Liberation Sans", "Noto Sans CJK SC", sans-serif;
  text-shadow: 0 0 1px #aaa, 0 0 1px #bbb;
}
.watermark > * {
  position: absolute;
}
.watermark svg {
  left: 49px;
  top: 0;
}
.bai {
  left: 0;
  top: 20px;
  font: bold 31px/28px "Liberation Sans", sans-serif;
}
.du {
  left: 57px;
  top: 24px;
  font: bold 20px/20px "Liberation Sans", sans-serif;
}
.jy {
  left: 92px;
  top: 20px;
  font-size: 25px;
  font-weight: bold;
  line-height: 26px;
}
.url {
  left: 2px;
  top: 49px;
  font: 16.500px/18px "Open Sans", sans-serif;
}
```
